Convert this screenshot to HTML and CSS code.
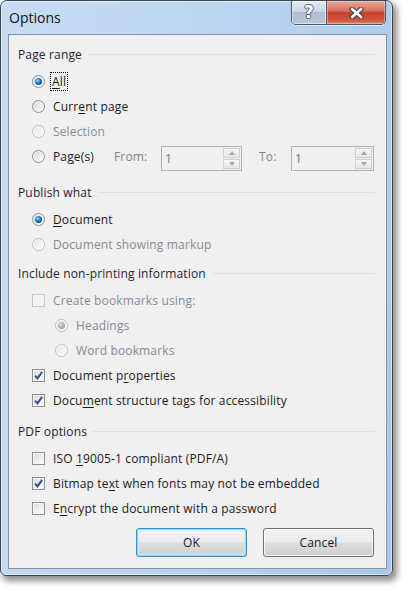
FILE: index.html
```html
<!DOCTYPE html>
<html>
<head>
<meta charset="utf-8">
<title>Options</title>
<link rel="stylesheet" href="styles.css">
</head>
<body>
<div class="window">
  <div class="titlebar">
    <div class="title">Options</div>
    <div class="caption-btns">
      <div class="cbtn help"><span class="qm">?</span></div>
      <div class="cbtn close">
        <svg width="15" height="12" viewBox="0 0 15 12">
          <path d="M3.2 2.2 L11.8 9.8 M11.8 2.2 L3.2 9.8" stroke="#4e4340" stroke-width="4.8" stroke-linecap="square" fill="none"/>
          <path d="M3.2 2.2 L11.8 9.8 M11.8 2.2 L3.2 9.8" stroke="#ffffff" stroke-width="2.6" stroke-linecap="square" fill="none"/>
        </svg>
      </div>
    </div>
  </div>

  <div class="client">
    <div class="group-head"><span>Page range</span><i class="rule"></i></div>
    <div class="rows">
      <div class="row"><span class="radio on"></span><span class="lbl focus"><u>A</u>ll</span></div>
      <div class="row"><span class="radio"></span><span class="lbl">Curr<u>e</u>nt page</span></div>
      <div class="row dis"><span class="radio"></span><span class="lbl">Selection</span></div>
      <div class="row pages">
        <span class="radio"></span><span class="lbl plbl">Pa<u>g</u>e(s)</span>
        <span class="flbl">From:</span>
        <div class="spin s-from"><span class="val">1</span><span class="arrows"><b class="up"></b><b class="dn"></b></span></div>
        <span class="tlbl">To:</span>
        <div class="spin s-to"><span class="val">1</span><span class="arrows"><b class="up"></b><b class="dn"></b></span></div>
      </div>
    </div>

    <div class="group-head gh2"><span>Publish what</span><i class="rule"></i></div>
    <div class="rows">
      <div class="row"><span class="radio on"></span><span class="lbl"><u>D</u>ocument</span></div>
      <div class="row dis"><span class="radio"></span><span class="lbl">Document showing markup</span></div>
    </div>

    <div class="group-head gh3"><span>Include non-printing information</span><i class="rule"></i></div>
    <div class="rows">
      <div class="row dis"><span class="check"></span><span class="lbl">Create bookmarks using:</span></div>
      <div class="row dis sub"><span class="radio on"></span><span class="lbl">Headings</span></div>
      <div class="row dis sub"><span class="radio"></span><span class="lbl">Word bookmarks</span></div>
      <div class="row"><span class="check on"><svg width="11" height="11" viewBox="0 0 11 11"><path d="M2 5.6 L4.4 8.4 L9.2 1.8" stroke="#34509a" stroke-width="2" fill="none"/></svg></span><span class="lbl">Document p<u>r</u>operties</span></div>
      <div class="row"><span class="check on"><svg width="11" height="11" viewBox="0 0 11 11"><path d="M2 5.6 L4.4 8.4 L9.2 1.8" stroke="#34509a" stroke-width="2" fill="none"/></svg></span><span class="lbl">Docu<u>m</u>ent structure tags for accessibility</span></div>
    </div>

    <div class="group-head gh4"><span>PDF options</span><i class="rule"></i></div>
    <div class="rows">
      <div class="row"><span class="check"></span><span class="lbl">ISO <u>1</u>9005-1 compliant (PDF/A)</span></div>
      <div class="row"><span class="check on"><svg width="11" height="11" viewBox="0 0 11 11"><path d="M2 5.6 L4.4 8.4 L9.2 1.8" stroke="#34509a" stroke-width="2" fill="none"/></svg></span><span class="lbl">Bitmap te<u>x</u>t when fonts may not be embedded</span></div>
      <div class="row"><span class="check"></span><span class="lbl">E<u>n</u>crypt the document with a password</span></div>
    </div>

    <div class="buttons">
      <div class="btn ok">OK</div>
      <div class="btn">Cancel</div>
    </div>
  </div>
</div>
</body>
</html>
```

FILE: styles.css
```css
html, body {
  margin: 0;
  padding: 0;
  background: #ffffff;
}

body {
  width: 408px;
  height: 591px;
  overflow: hidden;
  font-family: "Open Sans", "Noto Sans", sans-serif;
  font-size: 12px;
  letter-spacing: 0.15px;
  color: #1b1b1b;
}

.window {
  box-sizing: border-box;
  width: 393px;
  height: 576px;
  border: 1px solid #3c4754;
  border-radius: 7px 7px 6px 6px;
  background: linear-gradient(100deg, #c8ddf4 0%, #bcd4f0 45%, #a9c7eb 100%);
  box-shadow: inset 0 0 0 1px rgba(255,255,255,0.55), 3px 4px 6px 1px rgba(0,0,0,0.45);
  display: flex;
  flex-direction: column;
}

.titlebar {
  height: 33px;
  display: flex;
  justify-content: space-between;
  align-items: flex-start;
  flex: none;
}

.title {
  font-size: 14px;
  letter-spacing: 0;
  line-height: 18px;
  color: #111;
  margin: 8px 0 0 8px;
}

.caption-btns {
  display: flex;
  margin-right: 6px;
  border: 1px solid #4a5a6c;
  border-top: none;
  border-radius: 0 0 5px 5px;
  overflow: hidden;
  box-shadow: 0 1px 0 rgba(255,255,255,0.6);
}

.cbtn {
  height: 23px;
  display: flex;
  align-items: center;
  justify-content: center;
}

.help {
  width: 34px;
  border-right: 1px solid #4a5a6c;
  background: linear-gradient(#e2ebf5 0%, #cbd7e4 45%, #aebfd2 50%, #b9c9db 100%);
  box-shadow: inset 0 0 0 1px rgba(255,255,255,0.5);
}

.qm {
  font-family: "DejaVu Sans", sans-serif;
  font-weight: bold;
  font-size: 17px;
  line-height: 17px;
  color: #fff;
  text-shadow: 1px 0 0 #56606c, -1px 0 0 #56606c, 0 1px 0 #56606c, 0 -1px 0 #56606c;
}

.close {
  width: 58px;
  background: linear-gradient(#e8a898 0%, #d9705d 42%, #c43f2a 52%, #cf5a40 85%, #dc8a6c 100%);
  box-shadow: inset 0 0 0 1px rgba(255,220,210,0.45);
}

.close svg { display: block; }

.client {
  flex: 1;
  margin: 0 5px 6px 7px;
  border: 1px solid #8593a2;
  background: #f0f0f0;
  padding: 10px 11px 0 9px;
  display: flex;
  flex-direction: column;
}

.group-head {
  height: 18px;
  display: flex;
  align-items: center;
  color: #1d2436;
  white-space: nowrap;
}

.group-head .rule {
  flex: 1;
  height: 1px;
  margin-left: 6px;
  background: #d9e2ea;
}

.gh2 { margin-top: 14px; }
.gh3 { margin-top: 7px; }
.gh4 { margin-top: 9px; }

.rows {
  margin-top: 6px;
  display: flex;
  flex-direction: column;
}

.row {
  height: 25px;
  display: flex;
  align-items: center;
  padding-left: 14px;
  white-space: nowrap;
}

.row.sub { padding-left: 37px; }

.lbl {
  margin-left: 8px;
  line-height: 15px;
}

.row.dis .lbl { color: #848c97; }

.focus {
  border: 1px dotted #000;
  padding: 1px 1px;
  margin-left: 5px;
}

u { text-decoration: underline; text-underline-offset: 2px; }

.radio {
  box-sizing: border-box;
  width: 13px;
  height: 13px;
  border-radius: 50%;
  border: 1px solid #8b8d90;
  background: linear-gradient(135deg, #d2d3d5 0%, #eceded 55%, #fbfbfb 100%);
  box-shadow: inset 0 0 0 1px rgba(255,255,255,0.7);
  display: flex;
  align-items: center;
  justify-content: center;
  flex: none;
}

.radio.on::after {
  content: "";
  width: 7px;
  height: 7px;
  border-radius: 50%;
  background: radial-gradient(circle at 38% 35%, #a8e1ff 0%, #3b9ae0 28%, #13599b 62%, #0b3a6b 100%);
}

.row.dis .radio {
  border-color: #bcbec1;
  background: linear-gradient(135deg, #e4e5e6 0%, #f2f2f2 60%, #fcfcfc 100%);
}

.row.dis .radio.on::after {
  background: radial-gradient(circle at 38% 35%, #e6e6e6 0%, #b5b5b5 40%, #8e8e8e 100%);
}

.check {
  box-sizing: border-box;
  width: 13px;
  height: 13px;
  border: 1px solid #8e8f8f;
  background: linear-gradient(135deg, #d8d9da 0%, #efefef 55%, #fbfbfb 100%);
  box-shadow: inset 0 0 0 1px #f6f6f6;
  flex: none;
  display: flex;
  align-items: center;
  justify-content: center;
}

.check svg { display: block; }

.row.dis .check {
  border-color: #c4c6c8;
  background: #f4f4f4;
}

.plbl { width: 61px; flex: none; }

.flbl, .tlbl { color: #7c8591; flex: none; }

.flbl { width: 47px; }

.tlbl { margin-left: 17px; width: 32px; }

.spin {
  box-sizing: border-box;
  height: 25px;
  margin-top: 4px;
  border: 1px solid #adb2b5;
  background: #f0f0f0;
  display: flex;
  align-items: stretch;
  justify-content: space-between;
  flex: none;
}

.s-from { width: 81px; }
.s-to { width: 83px; }

.spin .val {
  color: #6f7782;
  padding-left: 3px;
  display: flex;
  align-items: center;
}

.arrows {
  width: 17px;
  display: flex;
  flex-direction: column;
  padding: 1px 1px 1px 0;
  gap: 1px;
}

.arrows b {
  flex: 1;
  box-sizing: border-box;
  border: 1px solid #cdcfd1;
  background: linear-gradient(#f6f6f6, #e6e6e6);
  display: flex;
  align-items: center;
  justify-content: center;
}

.arrows b.up::after {
  content: "";
  border-left: 3.5px solid transparent;
  border-right: 3.5px solid transparent;
  border-bottom: 4px solid #a4a8ad;
}

.arrows b.dn::after {
  content: "";
  border-left: 3.5px solid transparent;
  border-right: 3.5px solid transparent;
  border-top: 4px solid #a4a8ad;
}

.buttons {
  margin-top: 7px;
  display: flex;
  justify-content: flex-end;
  gap: 16px;
  padding-right: 1px;
}

.btn {
  box-sizing: border-box;
  width: 111px;
  height: 29px;
  border: 1px solid #707070;
  border-radius: 3px;
  background: linear-gradient(#f3f3f3 0%, #ebebeb 48%, #dddddd 52%, #cfcfcf 100%);
  box-shadow: inset 0 0 0 1px rgba(255,255,255,0.75);
  display: flex;
  align-items: center;
  justify-content: center;
  color: #1b1b1b;
}

.btn.ok {
  border-color: #3c8ac4;
  box-shadow: inset 0 0 0 1px #8fdcf9, inset 0 0 0 2px rgba(200,240,255,0.6);
}
```
